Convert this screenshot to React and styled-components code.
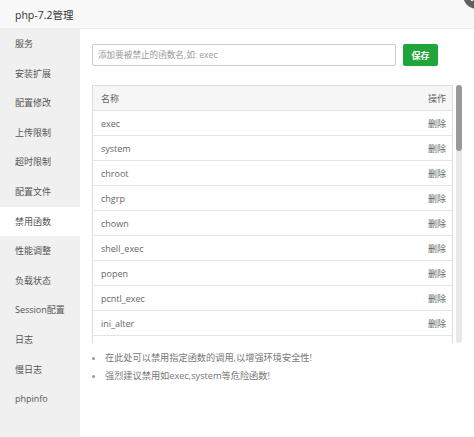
import styled, { createGlobalStyle } from "styled-components";

const GlobalStyle = createGlobalStyle`
  html, body {
    margin: 0;
    padding: 0;
    background: #fff;
    font-family: "Open Sans", "Noto Sans CJK SC", sans-serif;
    overflow: hidden;
  }
`;

const menu = [
  "服务", "安装扩展", "配置修改", "上传限制", "超时限制", "配置文件", "禁用函数",
  "性能调整", "负载状态", "Session配置", "日志", "慢日志", "phpinfo",
];

const functions = [
  "exec", "system", "chroot", "chgrp", "chown", "shell_exec", "popen", "pcntl_exec",
  "ini_alter",
];

const App = () => {
  return (
    <>
      <GlobalStyle />
      <Layer>
        <CloseButton>
          <svg width="28" height="28" viewBox="0 0 28 28">
            <circle cx="14" cy="14" r="14" fill="#606060" />
            <path d="M9 9 L19 19 M19 9 L9 19" stroke="#fff" strokeWidth="2.4" strokeLinecap="round" />
          </svg>
        </CloseButton>
        <TitleBar>php-7.2管理</TitleBar>
        <Body>
          <Sidebar>
            {menu.map((item) => (
              <MenuItem key={item} active={item === "禁用函数"}>{item}</MenuItem>
            ))}
          </Sidebar>
          <Main>
            <AddRow>
              <FuncInput placeholder="添加要被禁止的函数名,如: exec" />
              <SaveButton>保存</SaveButton>
            </AddRow>
            <TableArea>
              <TableClip>
                <Table>
                  <thead>
                    <tr>
                      <Th>名称</Th>
                      <Th right>操作</Th>
                    </tr>
                  </thead>
                  <tbody>
                    {functions.map((fn) => (
                      <tr key={fn}>
                        <Td>{fn}</Td>
                        <Td right><DeleteLink>删除</DeleteLink></Td>
                      </tr>
                    ))}
                    <tr>
                      <Td />
                      <Td />
                    </tr>
                  </tbody>
                </Table>
              </TableClip>
              <ScrollTrack>
                <ScrollThumb />
              </ScrollTrack>
            </TableArea>
            <Notes>
              <li>在此处可以禁用指定函数的调用,以增强环境安全性!</li>
              <li>强烈建议禁用如exec,system等危险函数!</li>
            </Notes>
          </Main>
        </Body>
      </Layer>
    </>
  );
};

const Layer = styled.div`
  position: relative;
  width: 474px;
  height: 437px;
  display: flex;
  flex-direction: column;
  background: #fff;
  overflow: hidden;
`;

const CloseButton = styled.div`
  position: absolute;
  left: 463px;
  top: -19px;
  width: 28px;
  height: 28px;
  svg {
    display: block;
  }
`;

const TitleBar = styled.div`
  height: 29px;
  flex-shrink: 0;
  box-sizing: border-box;
  padding-left: 15px;
  display: flex;
  align-items: center;
  background: #f8f8f8;
  border-bottom: 1px solid #eee;
  color: #333;
  font-size: 10.5px;
`;

const Body = styled.div`
  flex: 1;
  display: flex;
  min-height: 0;
`;

const Sidebar = styled.div`
  width: 80px;
  flex-shrink: 0;
  background: #f0f0f0;
  display: flex;
  flex-direction: column;
`;

const MenuItem = styled.div`
  height: 29.6px;
  line-height: 29.6px;
  padding-left: 15px;
  font-size: 9px;
  color: #555;
  background: ${(props) => (props.active ? "#fff" : "transparent")};
  cursor: pointer;
`;

const Main = styled.div`
  flex: 1;
  padding: 15px 12px 0 12px;
  display: flex;
  flex-direction: column;
`;

const AddRow = styled.div`
  display: flex;
  align-items: center;
  gap: 7px;
  width: 346px;
`;

const FuncInput = styled.input`
  width: 304px;
  height: 22px;
  box-sizing: border-box;
  border: 1px solid #ccc;
  border-radius: 2px;
  padding: 0 5px;
  font-family: "Open Sans", "Noto Sans CJK SC", sans-serif;
  font-size: 8.6px;
  color: #555;
  outline: none;
  &::placeholder {
    color: #999;
  }
`;

const SaveButton = styled.button`
  width: 35px;
  height: 22px;
  border: none;
  border-radius: 2px;
  background: #20a53a;
  color: #fff;
  font-family: "Open Sans", "Noto Sans CJK SC", sans-serif;
  font-size: 9px;
  font-weight: bold;
  padding: 0;
  cursor: pointer;
`;

const TableArea = styled.div`
  margin-top: 19px;
  width: 370px;
  height: 258px;
  display: flex;
  gap: 3px;
`;

const TableClip = styled.div`
  flex: 1;
  overflow: hidden;
`;

const ScrollTrack = styled.div`
  width: 6px;
  height: 100%;
  background: #e8e8e8;
  border-radius: 3px;
  display: flex;
  flex-direction: column;
`;

const ScrollThumb = styled.div`
  height: 66px;
  background: #999;
  border-radius: 3px;
`;

const Table = styled.table`
  width: 100%;
  border-collapse: collapse;
  border: 1px solid #ddd;
  font-size: 9px;
  color: #666;
  tr {
    height: 25px;
  }
`;

const Th = styled.th`
  background: #f6f6f6;
  font-weight: normal;
  text-align: ${(props) => (props.right ? "right" : "left")};
  padding: 0 ${(props) => (props.right ? "6px" : "8px")};
  border-bottom: 1px solid #e4e4e4;
  color: #666;
`;

const Td = styled.td`
  text-align: ${(props) => (props.right ? "right" : "left")};
  padding: 0 ${(props) => (props.right ? "6px" : "8px")};
  border-bottom: 1px solid #e4e4e4;
`;

const DeleteLink = styled.a`
  color: #666;
  cursor: pointer;
`;

const Notes = styled.ul`
  margin: 6px 0 0 0;
  padding: 0 0 0 13px;
  font-size: 9.2px;
  color: #777;
  line-height: 18px;
  li::marker {
    color: #999;
  }
`;

export default App;
